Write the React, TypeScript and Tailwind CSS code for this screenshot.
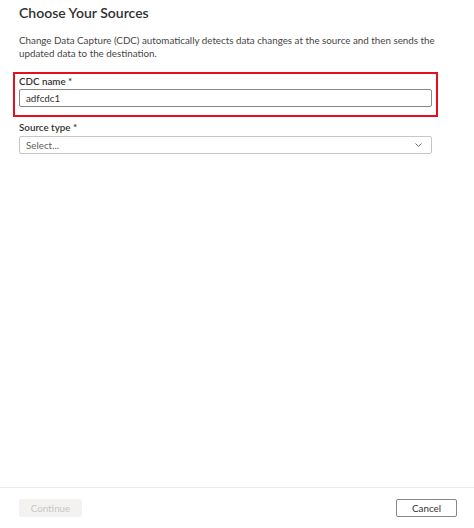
export default function App() {
  return (
    <div className="flex h-[528px] w-[474px] flex-col bg-white font-['Lato',sans-serif] text-[#323130]">
      <div className="flex-1 pl-[19px] pr-[42px] pt-[4px]">
        <h1 className="text-[14px] font-semibold leading-[18px]">Choose Your Sources</h1>
        <p className="-mr-[6px] mt-[12px] text-[9.8px] leading-[13px] text-[#484644]">
          Change Data Capture (CDC) automatically detects data changes at the source and then sends the
          updated data to the destination.
        </p>

        <div className="-mx-[6px] mt-[12px] border-2 border-[#e3101e] px-[4px] pb-[8px]">
          <label className="block text-[9.8px] font-semibold leading-[14px]">CDC name *</label>
          <div className="mt-[1px] flex h-[18px] items-center rounded-[2px] border border-[#8a8886] px-[6px] text-[9.8px]">
            adfcdc1
          </div>
        </div>

        <label className="mt-[3px] block text-[9.8px] font-semibold leading-[14px]">Source type *</label>
        <div className="mt-[2px] flex h-[18px] items-center justify-between rounded-[2px] border border-[#c8c6c4] pl-[6px] pr-[8px] text-[9.8px] text-[#605e5c]">
          <span>Select...</span>
          <svg width="7" height="4" viewBox="0 0 7 4" fill="none" className="mr-[1px]">
            <path d="M0.5 0.5L3.5 3.5L6.5 0.5" stroke="#605e5c" strokeWidth="0.9" />
          </svg>
        </div>
      </div>

      <div className="flex h-[41px] items-start justify-between border-t border-[#edebe9] pl-[19px] pr-[17px] pt-[11px]">
        <button className="h-[18px] w-[63px] rounded-[2px] bg-[#f3f2f1] text-[9.8px] text-[#c8c6c4]">
          Continue
        </button>
        <button className="h-[18px] w-[61px] rounded-[2px] border border-[#8a8886] bg-white text-[9.8px] text-[#323130]">
          Cancel
        </button>
      </div>
    </div>
  );
}
